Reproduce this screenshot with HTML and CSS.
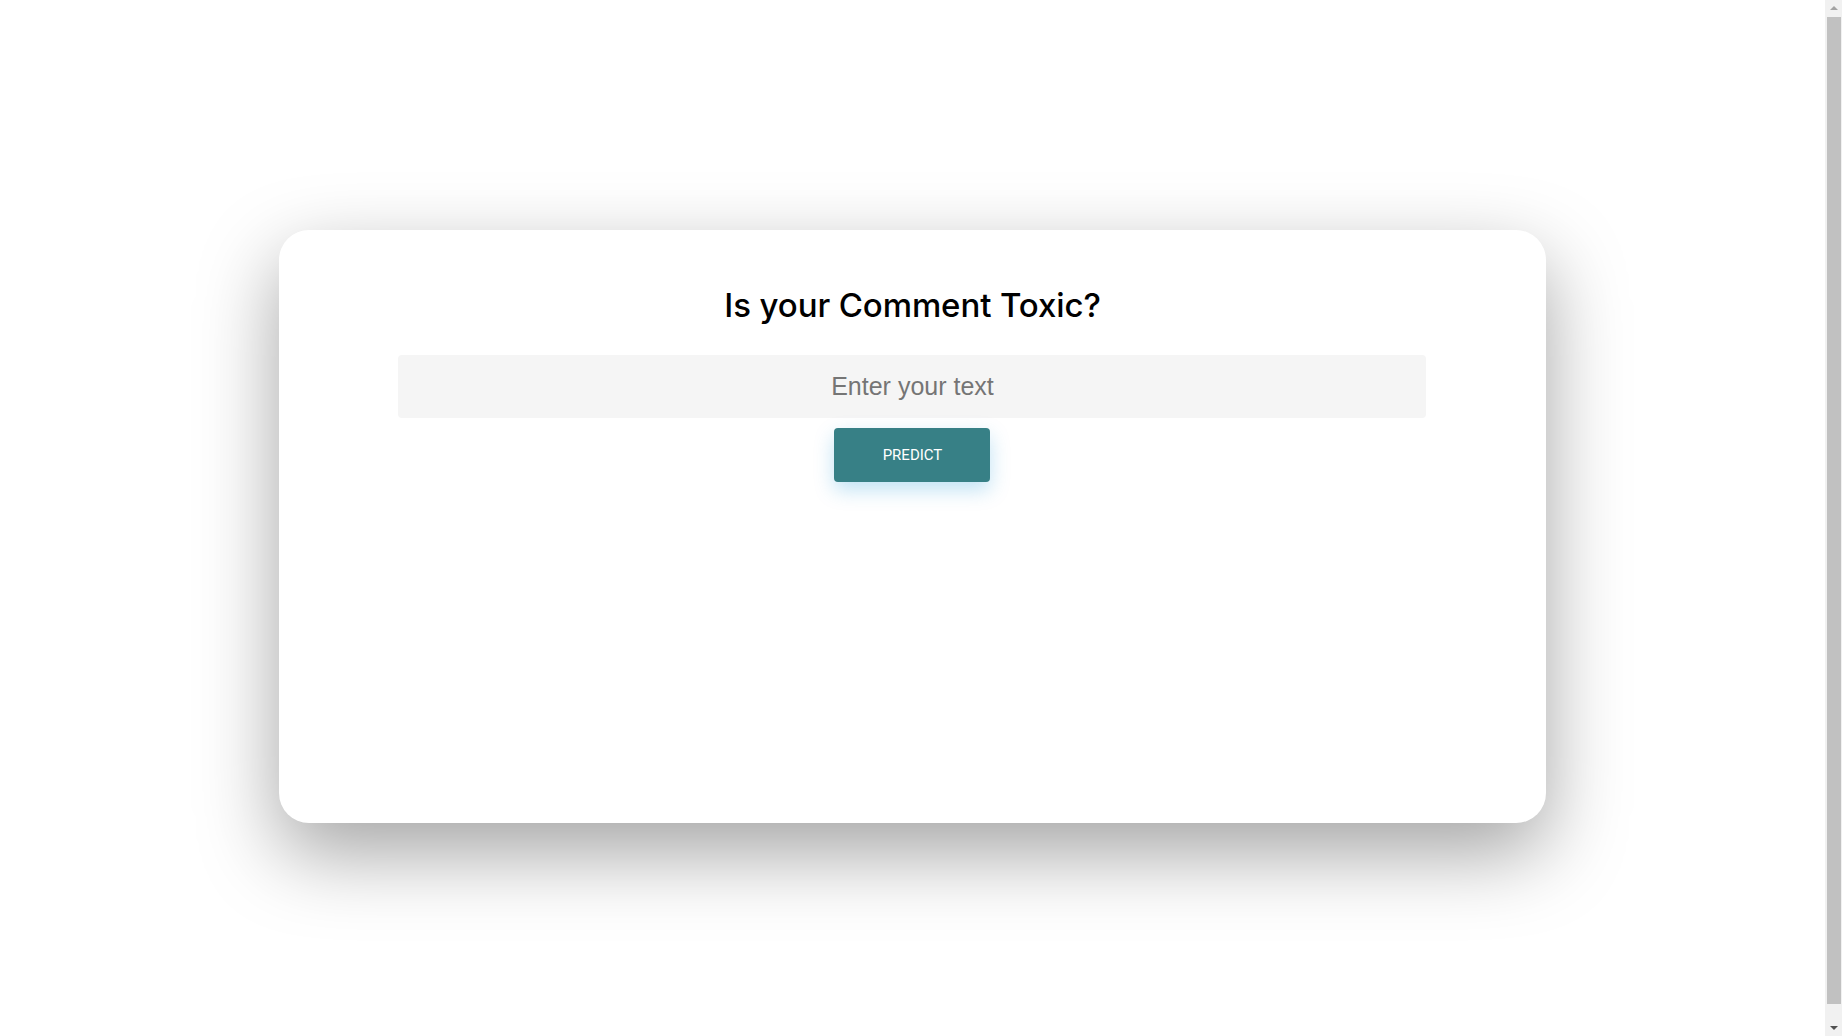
FILE: index.html
```html
<!DOCTYPE html>
<html lang="en">
<head>
<meta charset="utf-8">
<title>Toxic Comment Classifier</title>
<link rel="stylesheet" href="styles.css">
</head>
<body>
  <main class="card">
    <h1 class="title">Is your Comment Toxic?</h1>
    <form class="form">
      <input class="text-input" type="text" placeholder="Enter your text">
      <button class="predict-btn" type="button">PREDICT</button>
    </form>
  </main>
  <div class="scrollbar" aria-hidden="true">
    <div class="sb-btn"><span class="sb-arrow-up"></span></div>
    <div class="sb-thumb"></div>
    <div class="sb-track"></div>
    <div class="sb-btn"><span class="sb-arrow-down"></span></div>
  </div>
</body>
</html>
```
FILE: styles.css
```css
html {
  background: #ffffff;
}

body {
  margin: 8px 25px 8px 8px;
  min-height: 100vh;
  display: flex;
  align-items: center;
  justify-content: center;
  background: #ffffff;
  font-family: "Liberation Sans", Arial, sans-serif;
}

.card {
  width: 70%;
  height: 593px;
  box-sizing: border-box;
  background: #ffffff;
  border-radius: 30px;
  box-shadow: 0 30px 80px rgba(0, 0, 0, 0.36);
  display: flex;
  flex-direction: column;
  align-items: center;
  padding-top: 55px;
}

.title {
  margin: 0;
  font-family: Inter, "Noto Sans", sans-serif;
  font-weight: 500;
  font-size: 33px;
  line-height: 40px;
  color: #000000;
  letter-spacing: -0.1px;
}

.form {
  margin-top: 30px;
  width: 1028px;
  display: flex;
  flex-direction: column;
  align-items: center;
  gap: 10px;
}

.text-input {
  width: 100%;
  height: 63px;
  box-sizing: border-box;
  border: none;
  border-radius: 4px;
  background: #f5f5f5;
  font-family: "Liberation Sans", Arial, sans-serif;
  font-size: 25px;
  text-align: center;
  color: #333333;
  outline: none;
  padding: 0 12px;
}

.text-input::placeholder {
  color: #757575;
}

.predict-btn {
  width: 156px;
  height: 54px;
  border: none;
  border-radius: 4px;
  background: #378086;
  color: #ffffff;
  font-family: Roboto, "Liberation Sans", sans-serif;
  font-size: 15px;
  font-weight: 400;
  cursor: pointer;
  box-shadow: 0 8px 20px rgba(0, 140, 210, 0.25);
}

.scrollbar {
  position: fixed;
  top: 0;
  right: 0;
  width: 17px;
  height: 100vh;
  background: #f1f1f1;
  display: flex;
  flex-direction: column;
}

.sb-btn {
  height: 17px;
  flex: 0 0 17px;
  display: flex;
  align-items: center;
  justify-content: center;
}

.sb-arrow-up {
  width: 0;
  height: 0;
  border-left: 4px solid transparent;
  border-right: 4px solid transparent;
  border-bottom: 4px solid #a3a3a3;
  margin-top: -1px;
}

.sb-arrow-down {
  width: 0;
  height: 0;
  border-left: 4px solid transparent;
  border-right: 4px solid transparent;
  border-top: 4px solid #505050;
  margin-top: 1px;
}

.sb-thumb {
  flex: 0 0 987px;
  margin: 0 1px 0 2px;
  background: #c1c1c1;
}

.sb-track {
  flex: 1 1 auto;
}
```
